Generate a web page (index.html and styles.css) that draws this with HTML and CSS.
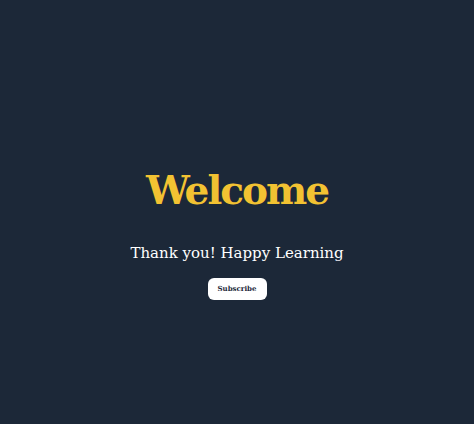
FILE: index.html
```html
<!DOCTYPE html>
<html>
<head>
<meta charset="utf-8">
<link rel="stylesheet" href="styles.css">
</head>
<body>
<main class="hero">
  <h1 class="title">Welcome</h1>
  <p class="subtitle">Thank you! Happy Learning</p>
  <button class="btn">Subscribe</button>
</main>
</body>
</html>
```
FILE: styles.css
```css
html, body {
  margin: 0;
  height: 100%;
}
body {
  background: #1c2838;
  font-family: "DejaVu Serif", serif;
}
.hero {
  height: 100%;
  display: flex;
  flex-direction: column;
  align-items: center;
  justify-content: flex-start;
  padding-top: 167px;
  box-sizing: border-box;
}
.title {
  margin: 0;
  color: #f2c232;
  font-size: 39px;
  font-weight: bold;
  line-height: 1.2;
  letter-spacing: -2px;
}
.subtitle {
  margin: 30px 0 0;
  color: #ffffff;
  font-size: 15px;
  line-height: 1.2;
}
.btn {
  margin-top: 16px;
  background: #ffffff;
  color: #1c2838;
  border: none;
  border-radius: 6px;
  width: 59px;
  height: 22px;
  padding: 0;
  font-family: "DejaVu Serif", serif;
  font-size: 7px;
  font-weight: bold;
}
```
